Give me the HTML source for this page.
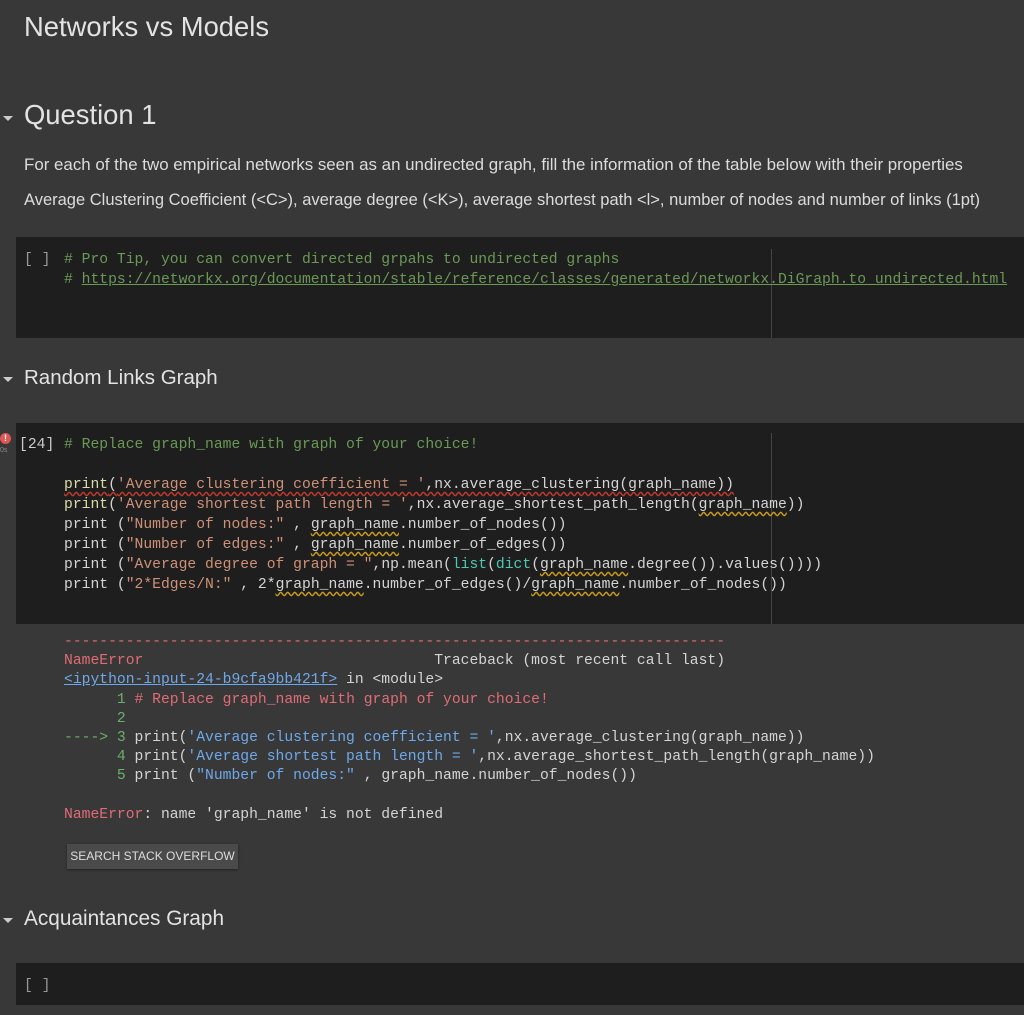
<!DOCTYPE html>
<html><head><meta charset="utf-8"><style>
body{margin:0;width:1024px;height:1015px;background:#383838;position:relative;overflow:hidden;font-family:"Liberation Sans",sans-serif;color:#e3e3e3}
.a{position:absolute;white-space:pre}
.h1{font-size:27.4px;left:24px}
.tri{position:absolute;left:3px;width:0;height:0;border-left:5px solid transparent;border-right:5px solid transparent;border-top:5px solid #ccc}
.p{font-size:16.9px;left:24px;color:#dcdcdc}
.cell{position:absolute;left:16px;width:1008px;background:#1e1e1e}
.m{font-family:"Liberation Mono",monospace;font-size:14.7px;line-height:20px;color:#d4d4d4}
.c{color:#6a9955}.s{color:#ce9178}.f{color:#dcdcaa}.t{color:#4ec9b0}
.r{color:#e06c75}.b{color:#6fa8e8}.g{color:#6ab06a}.br{color:#999}
.ul{text-decoration:underline wavy #c89b1b;text-underline-offset:3px}
.ur{text-decoration:underline wavy #c0392b;text-underline-offset:3px}
.ruler{position:absolute;left:771px;width:1px;background:#444}
</style></head><body>
<div class="a h1" style="top:11px">Networks vs Models</div>
<div class="tri" style="top:116px"></div>
<div class="a h1" style="top:99px">Question 1</div>
<div class="a p" style="top:155px">For each of the two empirical networks seen as an undirected graph, fill the information of the table below with their properties</div>
<div class="a p" style="top:191px;font-size:16.5px">Average Clustering Coefficient (&lt;C&gt;), average degree (&lt;K&gt;), average shortest path &lt;l&gt;, number of nodes and number of links (1pt)</div>

<div class="cell" style="top:237px;height:101px"><div class="ruler" style="left:755px;top:12px;height:89px"></div></div>
<div class="a m br" style="left:24px;top:250px">[ ]</div>
<div class="a m c" style="left:64px;top:250px"># Pro Tip, you can convert directed grpahs to undirected graphs
# <u>https://networkx.org/documentation/stable/reference/classes/generated/networkx.DiGraph.to_undirected.html</u></div>

<div class="tri" style="top:377px"></div>
<div class="a" style="left:24px;top:366px;font-size:20.5px">Random Links Graph</div>

<div class="cell" style="top:423px;height:201px"><div class="ruler" style="left:755px;top:10px;height:191px"></div></div>
<div style="position:absolute;left:0;top:433px;width:11px;height:11px;border-radius:50%;background:#e05555;color:#fff;font-size:9px;line-height:11px;text-align:center;font-weight:bold">!</div>
<div class="a" style="left:0;top:447px;font-size:7px;color:#888">0s</div>
<div class="a m" style="left:19px;top:435px;color:#ccc">[24]</div>
<div class="a m" style="left:64px;top:435px"><span class="c"># Replace graph_name with graph of your choice!</span>

<span class="ur"><span class="f">print</span>(<span class="s">'Average clustering coefficient = '</span>,nx.average_clustering(graph_name))</span>
<span class="f">print</span>(<span class="s">'Average shortest path length = '</span>,nx.average_shortest_path_length(<span class="ul">graph_name</span>))
print (<span class="s">"Number of nodes:"</span> , <span class="ul">graph_name</span>.number_of_nodes())
print (<span class="s">"Number of edges:"</span> , <span class="ul">graph_name</span>.number_of_edges())
print (<span class="s">"Average degree of graph = "</span>,np.mean(<span class="t">list</span>(<span class="t">dict</span>(<span class="ul">graph_name</span>.degree()).values())))
print (<span class="s">"2*Edges/N:"</span> , 2*<span class="ul">graph_name</span>.number_of_edges()/<span class="ul">graph_name</span>.number_of_nodes())</div>

<div class="a m" style="left:64px;top:633px;line-height:19.2px"><span class="r">---------------------------------------------------------------------------</span>
<span class="r">NameError</span>                                 Traceback (most recent call last)
<u class="b">&lt;ipython-input-24-b9cfa9bb421f&gt;</u> in &lt;module&gt;
<span class="g">      1</span> <span class="r"># Replace graph_name with graph of your choice!</span>
<span class="g">      2</span>
<span class="g">----&gt; 3</span> print(<span class="b">'Average clustering coefficient = '</span>,nx.average_clustering(graph_name))
<span class="g">      4</span> print(<span class="b">'Average shortest path length = '</span>,nx.average_shortest_path_length(graph_name))
<span class="g">      5</span> print (<span class="b">"Number of nodes:"</span> , graph_name.number_of_nodes())

<span class="r">NameError</span>: name 'graph_name' is not defined</div>
<div class="a" style="left:67px;top:844px;width:171px;height:25px;background:#4a4a4a;box-shadow:0 1px 2px #222;font-size:12px;line-height:25px;text-align:center;color:#ddd">SEARCH STACK OVERFLOW</div>

<div class="tri" style="top:918px"></div>
<div class="a" style="left:24px;top:907px;font-size:20.8px">Acquaintances Graph</div>
<div class="cell" style="top:963px;height:42px"></div>
<div class="a m br" style="left:24px;top:976px">[ ]</div>
</body></html>
